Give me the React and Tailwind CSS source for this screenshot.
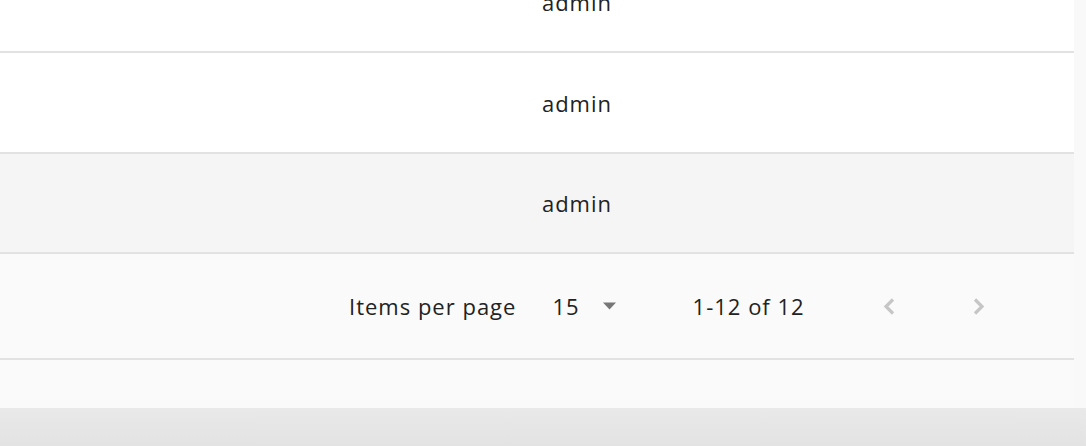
export default function App() {
  const rows = [
    { bg: "bg-white", h: "h-[100px] -mt-[47px]" },
    { bg: "bg-white", h: "h-[101px]" },
    { bg: "bg-[#f5f5f5]", h: "h-[100px]" },
  ];
  return (
    <div
      className="w-[1086px] h-[446px] overflow-hidden flex flex-col text-[#222] text-[22px] tracking-[1px]"
      style={{ fontFamily: '"Open Sans", "Noto Sans", sans-serif' }}
    >
      <div className="flex h-[408px] shrink-0 overflow-hidden">
        <div className="w-[1074px] flex flex-col">
          {rows.map((r, i) => (
            <div
              key={i}
              className={`flex items-center shrink-0 border-b-2 border-[#e2e2e2] ${r.bg} ${r.h}`}
            >
              <div className="w-[480px] shrink-0" />
              <div className="w-[194px] text-center leading-[30px]">admin</div>
            </div>
          ))}
          <div className="flex items-center h-[106px] shrink-0 bg-[#fafafa] border-b-2 border-[#e2e2e2] pl-[349px] leading-[30px]">
            <span>Items per page</span>
            <span className="ml-[36px]">15</span>
            <svg className="ml-[23px]" width="13" height="8" viewBox="0 0 13 8">
              <polygon points="0,0.5 13,0.5 6.5,7.5" fill="#777777" />
            </svg>
            <span className="ml-[77px]">1-12 of 12</span>
            <svg className="ml-[78px]" width="12" height="17" viewBox="0 0 12 17">
              <polyline
                points="10,1.5 3,8.5 10,15.5"
                fill="none"
                stroke="#c6c6c6"
                strokeWidth="3.2"
              />
            </svg>
            <svg className="ml-[78px]" width="12" height="17" viewBox="0 0 12 17">
              <polyline
                points="2,1.5 9,8.5 2,15.5"
                fill="none"
                stroke="#c6c6c6"
                strokeWidth="3.2"
              />
            </svg>
          </div>
          <div className="flex-1 bg-[#fafafa]" />
        </div>
        <div className="w-[12px] bg-[#f9f9f9]" />
      </div>
      <div className="flex-1 bg-gradient-to-b from-[#e9e9e9] to-[#e3e3e3]" />
    </div>
  );
}
